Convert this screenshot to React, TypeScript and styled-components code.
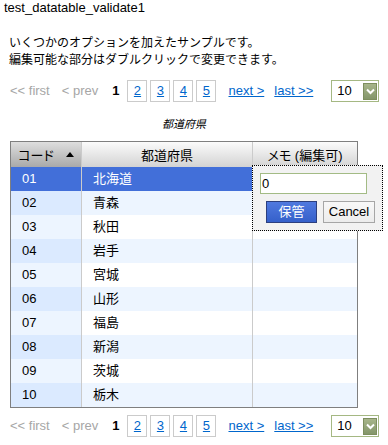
import React from 'react';
import styled, {createGlobalStyle} from 'styled-components';

const GlobalStyle = createGlobalStyle`
  html, body {
    margin: 0;
    padding: 0;
    background: #fff;
  }
  body {
    font-family: "Liberation Sans", "Noto Sans CJK JP", sans-serif;
    color: #000;
  }
  * {
    box-sizing: border-box;
  }
`;

const COLS = '71px 171px 104px';

const Page = styled.div`
  width: 388px;
  padding-left: 4px;
`;

const Title = styled.div`
  font-size: 13px;
  line-height: 16px;
`;

const Intro = styled.p`
  margin: 19px 0 0 5px;
  font-size: 12px;
  line-height: 17px;
`;

const Pager = styled.div<{$top: number}>`
  display: flex;
  align-items: center;
  height: 22px;
  margin: ${p => p.$top}px 0 0 6px;
  font-size: 13px;
  line-height: 22px;
`;

const Disabled = styled.span<{$mr: number}>`
  color: #a6a6a6;
  margin-right: ${p => p.$mr}px;
  white-space: pre;
`;

const Current = styled.span`
  font-weight: bold;
  margin-right: 8px;
`;

const PageBox = styled.a<{$mr: number}>`
  display: flex;
  justify-content: center;
  align-items: center;
  width: 20px;
  height: 22px;
  border: 1px solid #cbcbcb;
  margin-right: ${p => p.$mr}px;
  color: #0066cc;
  text-decoration: underline;
`;

const Link = styled.a<{$mr: number}>`
  color: #0066cc;
  text-decoration: underline;
  margin-right: ${p => p.$mr}px;
  white-space: pre;
`;

const SelectBox = styled.div`
  display: flex;
  align-items: center;
  justify-content: space-between;
  width: 48px;
  height: 22px;
  border: 1px solid #a5b883;
  padding: 0 1px 0 5px;
  background: #fff;
`;

const SelectArrow = styled.div`
  display: flex;
  align-items: center;
  justify-content: center;
  width: 14px;
  height: 17px;
  border: 1px solid #7d8e5e;
  background: linear-gradient(#a7b58a, #84966a);
`;

const Caption = styled.div`
  width: 348px;
  margin: 15px 0 9px 6px;
  text-align: center;
  font-style: italic;
  font-size: 11px;
  line-height: 15px;
`;

const TableWrap = styled.div`
  position: relative;
  width: 348px;
  margin-left: 6px;
  border: 1px solid #7f7f7f;
`;

const HeaderRow = styled.div`
  display: grid;
  grid-template-columns: ${COLS};
  height: 25px;
`;

const HeadCell = styled.div<{$sorted?: boolean; $last?: boolean}>`
  display: flex;
  align-items: center;
  justify-content: center;
  gap: 12px;
  font-size: 13px;
  font-feature-settings: "palt";
  border-right: ${p => (p.$last ? 'none' : '1px solid #cbcbcb')};
  background: ${p =>
    p.$sorted
      ? 'linear-gradient(#dedede, #a9a9a9)'
      : 'linear-gradient(#fbfbfb, #d3d3d3)'};
`;

const BodyRow = styled.div`
  display: grid;
  grid-template-columns: ${COLS};
  height: 24px;
`;

const cellBg = (sorted: boolean, alt: boolean, selected: boolean) => {
  if (selected) return '#426fd9';
  if (alt) return sorted ? '#dbeaff' : '#edf5ff';
  return sorted ? '#edf5ff' : '#ffffff';
};

const Cell = styled.div<{$sorted?: boolean; $alt: boolean; $selected: boolean; $last?: boolean}>`
  padding-left: 11px;
  font-size: 13px;
  line-height: 24px;
  color: ${p => (p.$selected ? '#fff' : '#000')};
  background: ${p => cellBg(!!p.$sorted, p.$alt, p.$selected)};
  border-right: ${p => (p.$last ? 'none' : '1px solid #cbcbcb')};
`;

const Editor = styled.div`
  position: absolute;
  left: 241px;
  top: 23px;
  width: 131px;
  height: 66px;
  padding: 7px;
  border: 1px dotted #000;
  background: #f2f2f2;
`;

const EditInput = styled.input`
  display: block;
  width: 107px;
  height: 21px;
  margin: 0;
  padding: 0 0 0 1px;
  border: 1px solid #a3bb85;
  font-family: "Liberation Sans", sans-serif;
  font-size: 13px;
  color: #000;
  background: #fff;
  outline: none;
`;

const ButtonRow = styled.div`
  display: flex;
  justify-content: flex-end;
  gap: 6px;
  margin-top: 7px;
`;

const Button = styled.button<{$primary?: boolean; $w: number}>`
  width: ${p => p.$w}px;
  height: 22px;
  margin: 0;
  padding: 0;
  font-family: "Liberation Sans", "Noto Sans CJK JP", sans-serif;
  font-size: 13px;
  line-height: 20px;
  color: ${p => (p.$primary ? '#fff' : '#000')};
  border: 1px solid ${p => (p.$primary ? '#2c3f7e' : '#a6a6a6')};
  background: ${p =>
    p.$primary ? 'linear-gradient(#5079df, #3560ca)' : 'linear-gradient(#f8f8f8, #ececec)'};
`;

const SortArrow = () => (
  <svg width="8" height="5" viewBox="0 0 8 5">
    <polygon points="0,5 8,5 4,0" fill="#000" />
  </svg>
);

const Chevron = () => (
  <svg width="9" height="7" viewBox="0 0 9 7">
    <polyline points="1,1.5 4.5,5 8,1.5" fill="none" stroke="#fff" strokeWidth="2" />
  </svg>
);

const rows = [
  ['01', '北海道'],
  ['02', '青森'],
  ['03', '秋田'],
  ['04', '岩手'],
  ['05', '宮城'],
  ['06', '山形'],
  ['07', '福島'],
  ['08', '新潟'],
  ['09', '茨城'],
  ['10', '栃木'],
];

const Paginator = ({top}: {top: number}) => (
  <Pager $top={top}>
    <Disabled $mr={12}>{'<< first'}</Disabled>
    <Disabled $mr={14}>{'< prev'}</Disabled>
    <Current>1</Current>
    {[2, 3, 4, 5].map(n => (
      <PageBox key={n} $mr={n === 5 ? 12 : 3}>
        {n}
      </PageBox>
    ))}
    <Link $mr={10}>{'next >'}</Link>
    <Link $mr={18}>{'last >>'}</Link>
    <SelectBox>
      <span>10</span>
      <SelectArrow>
        <Chevron />
      </SelectArrow>
    </SelectBox>
  </Pager>
);

export default function App() {
  return (
    <Page>
      <GlobalStyle />
      <Title>test_datatable_validate1</Title>
      <Intro>
        いくつかのオプションを加えたサンプルです。
        <br />
        編集可能な部分はダブルクリックで変更できます。
      </Intro>
      <Paginator top={11} />
      <Caption>都道府県</Caption>
      <TableWrap>
        <HeaderRow>
          <HeadCell $sorted>
            <span>コード</span>
            <SortArrow />
          </HeadCell>
          <HeadCell>都道府県</HeadCell>
          <HeadCell $last>メモ (編集可)</HeadCell>
        </HeaderRow>
        {rows.map(([code, name], i) => {
          const selected = i === 0;
          const alt = i % 2 === 1;
          return (
            <BodyRow key={code}>
              <Cell $sorted $alt={alt} $selected={selected}>
                {code}
              </Cell>
              <Cell $alt={alt} $selected={selected}>
                {name}
              </Cell>
              <Cell $alt={alt} $selected={selected} $last />
            </BodyRow>
          );
        })}
        <Editor>
          <EditInput defaultValue="0" />
          <ButtonRow>
            <Button $primary $w={51}>
              保管
            </Button>
            <Button $w={52}>Cancel</Button>
          </ButtonRow>
        </Editor>
      </TableWrap>
      <Paginator top={7} />
    </Page>
  );
}
